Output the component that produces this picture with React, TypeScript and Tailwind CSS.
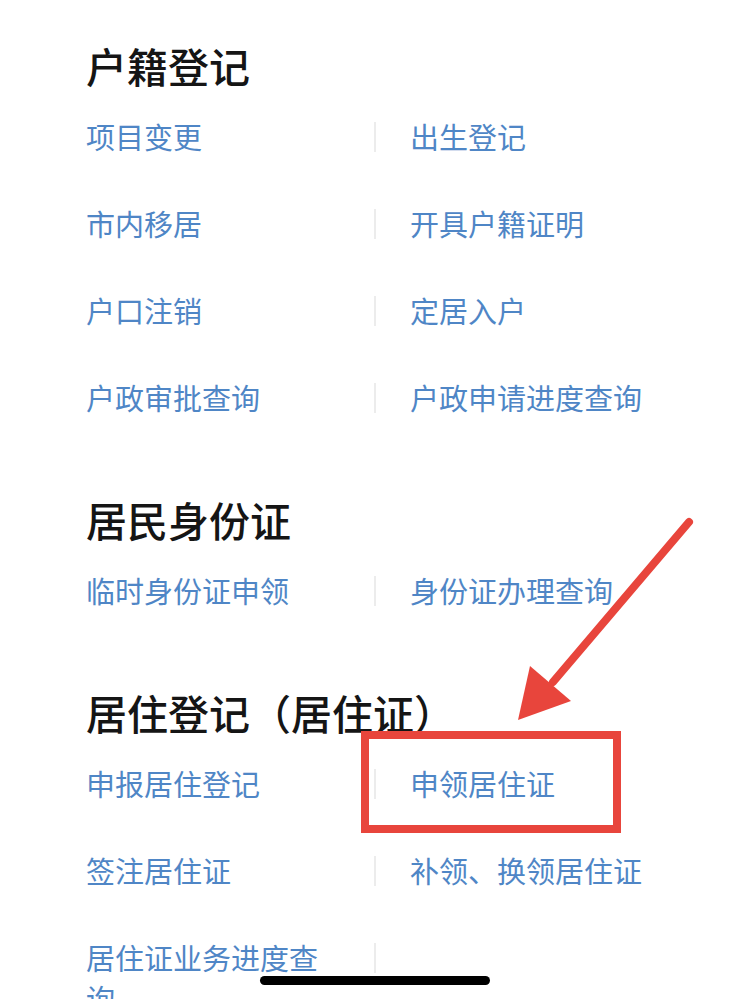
import React from "react";

type Sec = { title: string; rows: [string, string][] };

const sections: Sec[] = [
  {
    title: "户籍登记",
    rows: [
      ["项目变更", "出生登记"],
      ["市内移居", "开具户籍证明"],
      ["户口注销", "定居入户"],
      ["户政审批查询", "户政申请进度查询"],
    ],
  },
  { title: "居民身份证", rows: [["临时身份证申领", "身份证办理查询"]] },
  {
    title: "居住登记（居住证）",
    rows: [
      ["申报居住登记", "申领居住证"],
      ["签注居住证", "补领、换领居住证"],
      ["居住证业务进度查询", ""],
    ],
  },
];

export default function App() {
  return (
    <div
      className="relative w-[749px] h-[999px] overflow-hidden bg-white"
      style={{ fontFamily: '"Noto Sans CJK SC", "Noto Sans", sans-serif' }}
    >
      <div className="pt-[41px] pl-[86px] flex flex-col gap-[54px]">
        {sections.map((s) => (
          <div key={s.title} className="flex flex-col">
            <h2 className="text-[41px] leading-[48px] font-medium text-[#151515] mb-[4px]">
              {s.title}
            </h2>
            {s.rows.map((r, i) => (
              <div key={i} className="flex items-start py-[23px]">
                <div className="w-[288px] pr-[40px] text-[29px] leading-[41px] text-[#4f86c6]">
                  {r[0]}
                </div>
                <div className="w-[2px] h-[30px] mt-[6px] bg-[#ececec]" />
                <div className="pl-[34px] text-[29px] leading-[41px] text-[#4f86c6] whitespace-nowrap">
                  {r[1]}
                </div>
              </div>
            ))}
          </div>
        ))}
      </div>

      {/* red highlight box */}
      <div className="absolute left-[361px] top-[731px] w-[260px] h-[102px] border-[8px] border-[#e8453c]" />

      {/* arrow */}
      <svg className="absolute left-0 top-0" width="749" height="999" viewBox="0 0 749 999">
        <line x1="689" y1="522" x2="553" y2="682" stroke="#e8453c" strokeWidth="8" strokeLinecap="round" />
        <polygon points="518,720 530,666 571,701" fill="#e8453c" />
      </svg>

      {/* home indicator */}
      <div className="absolute left-[260px] top-[976px] w-[230px] h-[9px] rounded-full bg-black" />
    </div>
  );
}
